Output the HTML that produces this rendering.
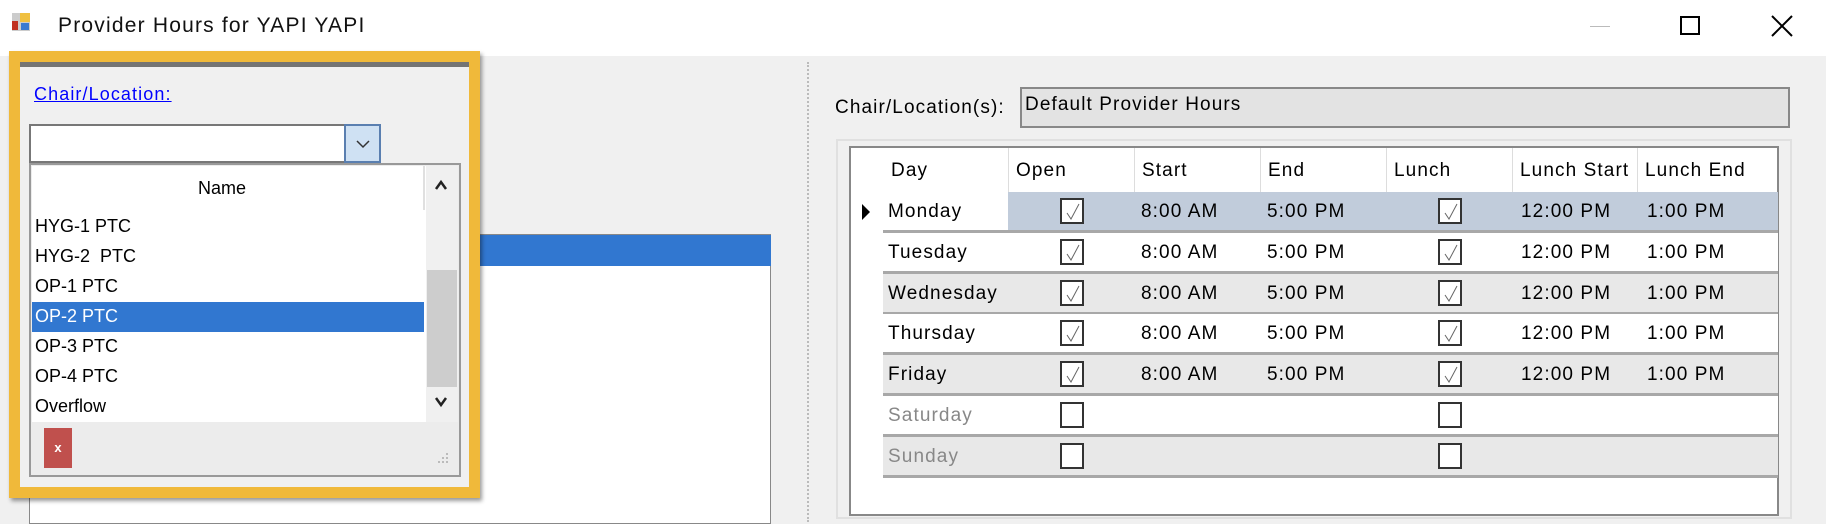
<!DOCTYPE html>
<html><head><meta charset="utf-8"><style>
*{margin:0;padding:0;box-sizing:border-box}
body{width:1826px;height:510px;background:#f0f0f0;position:relative;overflow:hidden;font-family:"Liberation Sans",sans-serif;color:#000}
.a{position:absolute}
.t{font-size:18px;white-space:nowrap}
.w{font-size:19px;letter-spacing:1.1px;white-space:nowrap}
.cb{position:absolute;width:24px;height:26px;border:2px solid #333;background:#fff}
.cb svg{position:absolute;left:2px;top:3px}
</style></head><body>
<!-- title bar -->
<div class="a" style="left:0;top:0;width:1826px;height:56px;background:#fff"></div>
<div class="a" style="left:12px;top:13px;width:18px;height:18px;background:#ccc"></div>
<div class="a" style="left:20px;top:13px;width:10px;height:9px;background:#f0c040"></div>
<div class="a" style="left:12px;top:21px;width:6px;height:9px;background:#c03020"></div>
<div class="a" style="left:21px;top:23px;width:8px;height:7px;background:#3a7ad0"></div>
<div class="a" style="left:58px;top:14px;font-size:21px;letter-spacing:1.2px;white-space:nowrap;color:#111">Provider Hours for YAPI YAPI</div>
<div class="a" style="left:1590px;top:26px;width:20px;height:1px;background:#bbb"></div>
<div class="a" style="left:1680px;top:16px;width:20px;height:19px;border:2px solid #000"></div>
<svg class="a" style="left:1771px;top:15px" width="22" height="22"><path d="M1 1L21 21M21 1L1 21" stroke="#000" stroke-width="2"/></svg>

<!-- background listbox -->
<div class="a" style="left:29px;top:234px;width:742px;height:290px;background:#fff;border:1px solid #888"></div>
<div class="a" style="left:29px;top:235px;width:742px;height:31px;background:#3177d0"></div>
<div class="a" style="left:807px;top:62px;width:2px;height:460px;border-left:2px dotted #bbb"></div>

<!-- orange panel -->
<div class="a" style="left:9px;top:51px;width:471px;height:447px;border:11px solid #f0b93a;background:#f0f0f0;box-shadow:2px 3px 4px rgba(0,0,0,.4)"></div>
<div class="a" style="left:20px;top:62px;width:449px;height:5px;background:#555;opacity:.8"></div>
<div class="a w" style="left:34px;top:84px;font-size:18px;color:#00f;text-decoration:underline">Chair/Location:</div>
<div class="a" style="left:29px;top:124px;width:352px;height:39px;background:#fff;border:2px solid #777"></div>
<div class="a" style="left:344px;top:124px;width:37px;height:39px;background:#cfe1f3;border:2px solid #5a7fb0"></div>
<svg class="a" style="left:355px;top:138px" width="16" height="12"><path d="M2 3L8 9L14 3" stroke="#333" stroke-width="1.5" fill="none"/></svg>
<div class="a" style="left:29px;top:163px;width:432px;height:314px;background:#ececec;border:2px solid #999"></div>
<div class="a" style="left:32px;top:166px;width:394px;height:256px;background:#fff"></div>
<div class="a" style="left:423px;top:166px;width:2px;height:44px;background:#e0e0e0"></div>
<div class="a t" style="left:198px;top:178px;font-size:18px">Name</div>
<div class="a t" style="left:35px;top:216px">HYG-1 PTC</div>
<div class="a t" style="left:35px;top:246px">HYG-2 &nbsp;PTC</div>
<div class="a t" style="left:35px;top:276px">OP-1 PTC</div>
<div class="a" style="left:32px;top:302px;width:392px;height:30px;background:#3177d0"></div>
<div class="a t" style="left:35px;top:306px;color:#fff">OP-2 PTC</div>
<div class="a t" style="left:35px;top:336px">OP-3 PTC</div>
<div class="a t" style="left:35px;top:366px">OP-4 PTC</div>
<div class="a t" style="left:35px;top:396px">Overflow</div>
<div class="a" style="left:426px;top:166px;width:32px;height:256px;background:#f0f0f0"></div>
<div class="a" style="left:427px;top:270px;width:30px;height:117px;background:#cdcdcd"></div>
<svg class="a" style="left:433px;top:178px" width="16" height="14"><path d="M3 11L8 4L13 11" stroke="#222" stroke-width="2.5" fill="none"/></svg>
<svg class="a" style="left:433px;top:395px" width="16" height="14"><path d="M3 3L8 10L13 3" stroke="#222" stroke-width="2.5" fill="none"/></svg>
<div class="a" style="left:44px;top:428px;width:28px;height:40px;background:#c0504d;color:#fff;font-size:13px;font-weight:bold;text-align:center;line-height:40px">x</div>
<svg class="a" style="left:436px;top:452px" width="14" height="16"><g fill="#bbb"><rect x="10" y="1" width="2" height="2"/><rect x="6" y="5" width="2" height="2"/><rect x="10" y="5" width="2" height="2"/><rect x="2" y="9" width="2" height="2"/><rect x="6" y="9" width="2" height="2"/><rect x="10" y="9" width="2" height="2"/></g></svg>

<!-- right side -->
<div class="a w" style="left:835px;top:97px">Chair/Location(s):</div>
<div class="a" style="left:1020px;top:87px;width:770px;height:41px;background:#e3e3e3;border:2px solid #888"></div>
<div class="a w" style="left:1025px;top:94px">Default Provider Hours</div>
<div class="a" style="left:836px;top:139px;width:956px;height:380px;border:2px solid #e0e0e0"></div>
<div class="a" style="left:849px;top:146px;width:930px;height:370px;background:#fff;border:2px solid #888"></div>

<div id="g"></div>
<script>
var cols=[883,1008,1134,1260,1386,1512,1637,1778];
var h='';
var heads=['Day','Open','Start','End','Lunch','Lunch Start','Lunch End'];
for(var i=0;i<7;i++){h+='<div class="a w" style="left:'+(cols[i]+8)+'px;top:160px">'+heads[i]+'</div>';
 if(i>0)h+='<div class="a" style="left:'+cols[i]+'px;top:148px;width:1px;height:44px;background:#ddd"></div>';}
var days=['Monday','Tuesday','Wednesday','Thursday','Friday','Saturday','Sunday'];
var bgs=['#fff','#fff','#e8e8e8','#fff','#e8e8e8','#fff','#e8e8e8'];
var chk='<svg width="18" height="18"><path d="M3 10L7 16L15 1" stroke="#666" stroke-width="1" fill="none"/></svg>';
for(var r=0;r<7;r++){var y=192+Math.round(r*40.8);
 h+='<div class="a" style="left:883px;top:'+y+'px;width:895px;height:39px;background:'+bgs[r]+'"></div>';
 if(r==0)h+='<div class="a" style="left:1008px;top:'+y+'px;width:770px;height:39px;background:#c1ccdb"></div>';
 h+='<div class="a" style="left:883px;top:'+(y+38)+'px;width:895px;height:3px;background:#a8a8a8"></div>';
 var col=r>=5?'#888':'#000';
 h+='<div class="a w" style="left:888px;top:'+(y+9)+'px;color:'+col+'">'+days[r]+'</div>';
 var c=r<5?chk:'';
 h+='<div class="cb" style="left:1060px;top:'+(y+6)+'px">'+c+'</div>';
 h+='<div class="cb" style="left:1438px;top:'+(y+6)+'px">'+c+'</div>';
 if(r<5){h+='<div class="a w" style="left:1141px;top:'+(y+9)+'px">8:00 AM</div>';
 h+='<div class="a w" style="left:1267px;top:'+(y+9)+'px">5:00 PM</div>';
 h+='<div class="a w" style="left:1521px;top:'+(y+9)+'px">12:00 PM</div>';
 h+='<div class="a w" style="left:1647px;top:'+(y+9)+'px">1:00 PM</div>';}
}
h+='<svg class="a" style="left:862px;top:204px" width="8" height="16"><path d="M0 0L8 8L0 16Z" fill="#000"/></svg>';
document.getElementById('g').innerHTML=h;
</script>
</body></html>
